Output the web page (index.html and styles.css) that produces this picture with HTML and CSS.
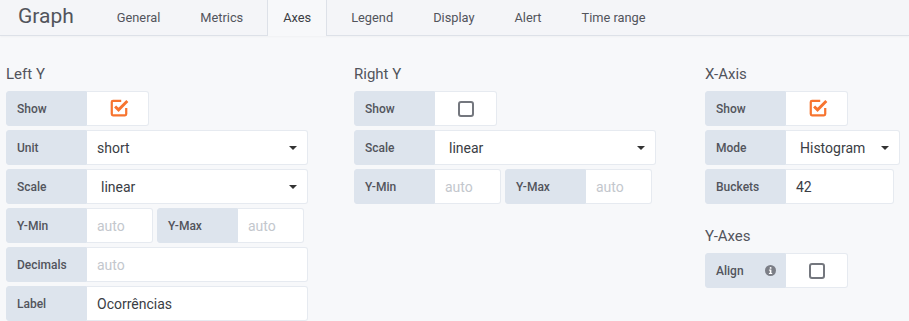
FILE: index.html
```html
<!DOCTYPE html>
<html lang="en">
<head>
    <meta charset="UTF-8">
    <title>Graph - Axes</title>
    <link rel="stylesheet" href="styles.css">
</head>
<body>
    <div class="tabbed-header">
        <h2 class="view-title">Graph</h2>
        <ul class="tabs">
            <li class="tab">General</li>
            <li class="tab">Metrics</li>
            <li class="tab active">Axes</li>
            <li class="tab">Legend</li>
            <li class="tab">Display</li>
            <li class="tab">Alert</li>
            <li class="tab">Time range</li>
        </ul>
    </div>

    <div class="editor">
        <div class="section section-left">
            <h5 class="section-heading">Left Y</h5>
            <div class="form">
                <label class="form-label">Show</label>
                <div class="form-switch">
                    <svg class="check" width="20" height="20" viewBox="0 0 18 18"><path d="M11 3.5H3.6Q2.5 3.5 2.5 4.6V15.4Q2.5 16.5 3.6 16.5H14.4Q15.5 16.5 15.5 15.4V10" fill="none" stroke="#f7742f" stroke-width="2"/><path d="M5.5 8.5L8.6 11.6L16.5 3.6" fill="none" stroke="#f7742f" stroke-width="2.6"/></svg>
                </div>
            </div>
            <div class="form">
                <label class="form-label">Unit</label>
                <div class="form-input width-wide">short<i class="caret"></i></div>
            </div>
            <div class="form">
                <label class="form-label">Scale</label>
                <div class="form-input form-select width-wide">linear<i class="caret"></i></div>
            </div>
            <div class="form-inline">
                <div class="form">
                    <label class="form-label">Y-Min</label>
                    <div class="form-input width-small placeholder">auto</div>
                </div>
                <div class="form">
                    <label class="form-label">Y-Max</label>
                    <div class="form-input width-small placeholder">auto</div>
                </div>
            </div>
            <div class="form">
                <label class="form-label">Decimals</label>
                <div class="form-input width-wide placeholder">auto</div>
            </div>
            <div class="form">
                <label class="form-label">Label</label>
                <div class="form-input width-wide">Ocorrências</div>
            </div>
        </div>

        <div class="section section-mid">
            <h5 class="section-heading">Right Y</h5>
            <div class="form">
                <label class="form-label">Show</label>
                <div class="form-switch"><span class="box"></span></div>
            </div>
            <div class="form">
                <label class="form-label">Scale</label>
                <div class="form-input form-select width-wide">linear<i class="caret"></i></div>
            </div>
            <div class="form-inline">
                <div class="form">
                    <label class="form-label">Y-Min</label>
                    <div class="form-input width-small placeholder">auto</div>
                </div>
                <div class="form">
                    <label class="form-label">Y-Max</label>
                    <div class="form-input width-small placeholder">auto</div>
                </div>
            </div>
        </div>

        <div class="section">
            <h5 class="section-heading">X-Axis</h5>
            <div class="form">
                <label class="form-label">Show</label>
                <div class="form-switch">
                    <svg class="check" width="20" height="20" viewBox="0 0 18 18"><path d="M11 3.5H3.6Q2.5 3.5 2.5 4.6V15.4Q2.5 16.5 3.6 16.5H14.4Q15.5 16.5 15.5 15.4V10" fill="none" stroke="#f7742f" stroke-width="2"/><path d="M5.5 8.5L8.6 11.6L16.5 3.6" fill="none" stroke="#f7742f" stroke-width="2.6"/></svg>
                </div>
            </div>
            <div class="form">
                <label class="form-label">Mode</label>
                <div class="form-input form-select width-mode">Histogram<i class="caret"></i></div>
            </div>
            <div class="form">
                <label class="form-label">Buckets</label>
                <div class="form-input width-buckets">42</div>
            </div>

            <h5 class="section-heading second">Y-Axes</h5>
            <div class="form">
                <label class="form-label">Align
                    <svg class="info" width="11" height="11" viewBox="0 0 11 11"><circle cx="5.5" cy="5.5" r="5.5" fill="#7b7e86"/><rect x="4.8" y="4.6" width="1.6" height="4" fill="#fff"/><rect x="3.9" y="8" width="3.3" height="1" fill="#fff"/><rect x="3.9" y="4.6" width="1.6" height="1" fill="#fff"/><circle cx="5.6" cy="2.9" r="0.95" fill="#fff"/></svg>
                </label>
                <div class="form-switch"><span class="box"></span></div>
            </div>
        </div>
    </div>
</body>
</html>
```

FILE: styles.css
```css
body {
    margin: 0;
    background-color: #f7f8fa;
    font-family: Roboto, "Liberation Sans", sans-serif;
    color: #52545c;
}
.tabbed-header {
    display: flex;
    align-items: stretch;
    height: 35px;
    padding-left: 18px;
    background: #f4f5f8;
    border-bottom: 1px solid #dde1e8;
    box-shadow: 0 1px 2px rgba(0, 0, 0, 0.03);
}
.view-title {
    margin: 0 27px 0 0;
    font-size: 21px;
    font-weight: 400;
    line-height: 33px;
    color: #52545c;
}
.tabs {
    display: flex;
    margin: 0;
    padding: 0;
    list-style: none;
}
.tab {
    padding: 0 16px;
    margin-right: 8px;
    font-size: 12.8px;
    line-height: 35px;
    color: #52545c;
}
.tab.active {
    background: #f7f8fa;
    border-left: 1px solid #dde1e8;
    border-right: 1px solid #dde1e8;
    padding: 0 15px;
    height: 36px;
    color: #3b3d44;
}
.editor {
    display: flex;
    padding: 29px 0 0 6px;
}
.section-left {
    width: 348px;
}
.section-mid {
    width: 351px;
}
.section-heading {
    margin: 0 0 8px 0;
    font-size: 15px;
    font-weight: 400;
    line-height: 18px;
    color: #52545c;
}
.section-heading.second {
    margin-top: 23px;
}
.form-inline {
    display: flex;
    gap: 4px;
}
.form {
    display: flex;
    height: 35px;
    margin-bottom: 4px;
}
.form-label {
    display: flex;
    align-items: center;
    justify-content: space-between;
    box-sizing: border-box;
    width: 81px;
    padding: 0 9px 0 10px;
    background: #dde4ed;
    border: 1px solid #dde4ed;
    border-radius: 3px 0 0 3px;
    font-size: 12px;
    font-weight: 500;
    color: #52545c;
}
.form-switch {
    display: flex;
    align-items: center;
    justify-content: center;
    box-sizing: border-box;
    width: 62px;
    background: white;
    border: 1px solid #e6eaf0;
    border-left: none;
    border-radius: 0 3px 3px 0;
}
.box {
    width: 12px;
    height: 12px;
    border: 2px solid #74777e;
    border-radius: 3px;
}
.check {
    margin: -3px 0 0 2px;
}
.form-input {
    position: relative;
    display: flex;
    align-items: center;
    box-sizing: border-box;
    padding: 0 10px;
    background: white;
    border: 1px solid #e6eaf0;
    border-left: none;
    border-radius: 0 3px 3px 0;
    font-size: 14px;
    color: #3a3d44;
}
.form-select {
    padding-left: 14px;
}
.placeholder {
    color: #c3c7cd;
}
.width-wide {
    width: 221px;
}
.width-small {
    width: 66px;
}
.width-mode {
    width: 114px;
}
.width-buckets {
    width: 108px;
}
.caret {
    position: absolute;
    right: 10px;
    top: 15px;
    width: 0;
    height: 0;
    border-top: 4px solid #333;
    border-left: 4px solid transparent;
    border-right: 4px solid transparent;
}
```
